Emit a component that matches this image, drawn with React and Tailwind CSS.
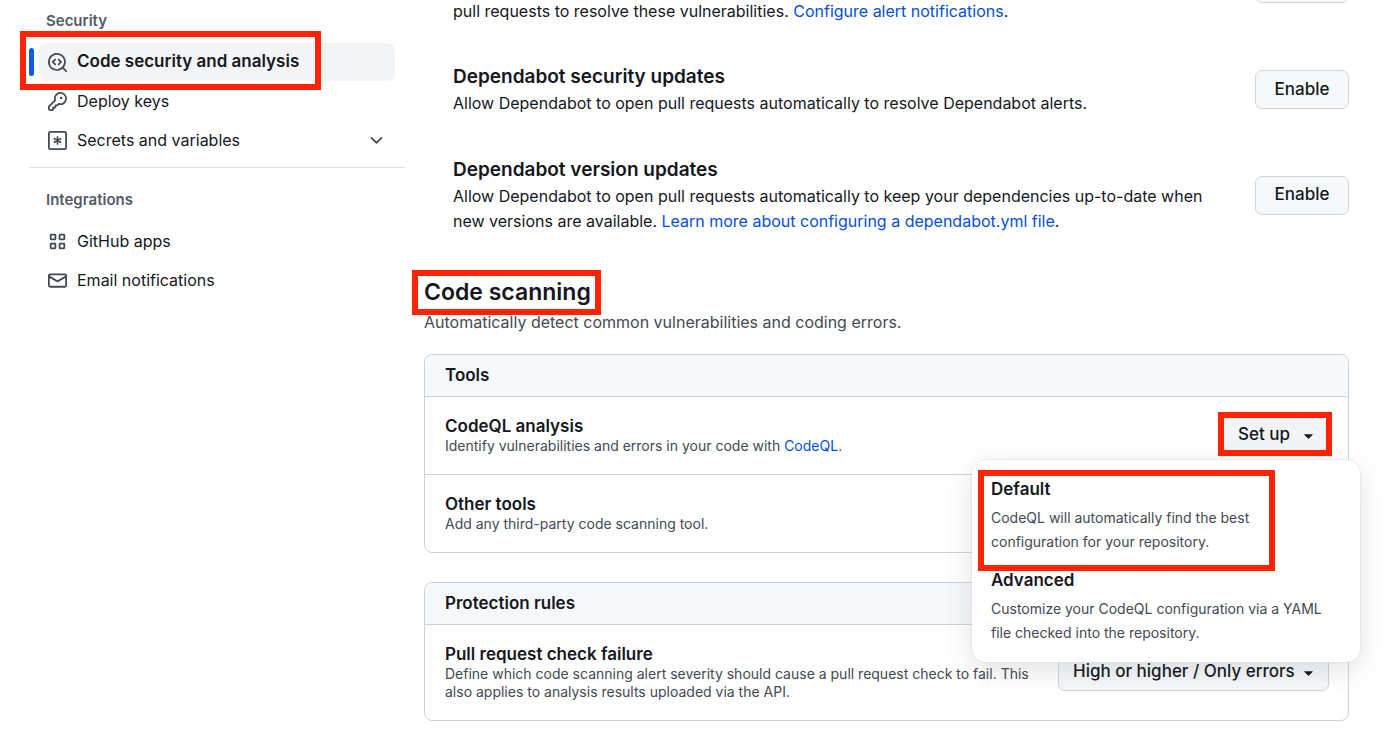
import React from "react";

const Icon = ({ className, children }) => (
  <svg viewBox="0 0 16 16" fill="currentColor" aria-hidden="true" className={className}>
    {children}
  </svg>
);

const CodescanIcon = (props) => (
  <Icon {...props}>
    <path d="M8.47 4.97a.75.75 0 0 0 0 1.06L9.94 7.5 8.47 8.97a.75.75 0 1 0 1.06 1.06l2-2a.75.75 0 0 0 0-1.06l-2-2a.75.75 0 0 0-1.06 0ZM6.53 6.03a.75.75 0 0 0-1.06-1.06l-2 2a.75.75 0 0 0 0 1.06l2 2a.75.75 0 1 0 1.06-1.06L5.06 7.5l1.47-1.47Z" />
    <path d="M12.246 13.307a7.501 7.501 0 1 1 1.06-1.06l2.474 2.473a.749.749 0 1 1-1.06 1.06l-2.474-2.473ZM1.5 7.5a6.002 6.002 0 0 0 3.608 5.504 6.002 6.002 0 0 0 6.486-1.117.748.748 0 0 1 .292-.293A6 6 0 1 0 1.5 7.5Z" />
  </Icon>
);

const KeyIcon = (props) => (
  <Icon {...props}>
    <path d="M10.5 0a5.499 5.499 0 1 1-1.288 10.848l-.932.932a.749.749 0 0 1-.53.22H7v.75a.749.749 0 0 1-.22.53l-.5.5a.749.749 0 0 1-.53.22H5v.75a.749.749 0 0 1-.22.53l-.5.5a.749.749 0 0 1-.53.22h-2A1.75 1.75 0 0 1 0 14.25v-2c0-.199.079-.389.22-.53l4.932-4.932A5.5 5.5 0 0 1 10.5 0Zm-4 5.5c-.001.431.069.86.205 1.269a.75.75 0 0 1-.181.768L1.5 12.56v1.69c0 .138.112.25.25.25h1.69l.06-.06v-1.19a.75.75 0 0 1 .75-.75h1.19l.06-.06v-1.19a.75.75 0 0 1 .75-.75h1.19l1.023-1.025a.75.75 0 0 1 .768-.18A4 4 0 1 0 6.5 5.5ZM11 6a1 1 0 1 1 0-2 1 1 0 0 1 0 2Z" />
  </Icon>
);

const KeyAsteriskIcon = (props) => (
  <Icon {...props}>
    <g fill="none" stroke="currentColor" strokeWidth="1.5">
      <rect x="0.75" y="0.75" width="14.5" height="14.5" rx="1.2" />
      <path d="M8 5v6M5.4 6.5l5.2 3M10.6 6.5l-5.2 3" strokeLinecap="round" strokeWidth="1.4" />
    </g>
  </Icon>
);

const AppsIcon = (props) => (
  <Icon {...props}>
    <g fill="none" stroke="currentColor" strokeWidth="1.5">
      <rect x="2.25" y="2.25" width="4" height="4" rx="0.5" />
      <rect x="9.75" y="2.25" width="4" height="4" rx="0.5" />
      <rect x="2.25" y="9.75" width="4" height="4" rx="0.5" />
      <rect x="9.75" y="9.75" width="4" height="4" rx="0.5" />
    </g>
  </Icon>
);

const MailIcon = (props) => (
  <Icon {...props}>
    <path d="M1.75 2h12.5c.966 0 1.75.784 1.75 1.75v8.5A1.75 1.75 0 0 1 14.25 14H1.75A1.75 1.75 0 0 1 0 12.25v-8.5C0 2.784.784 2 1.75 2ZM1.5 12.251c0 .138.112.25.25.25h12.5a.25.25 0 0 0 .25-.25V5.809L8.38 9.397a.75.75 0 0 1-.76 0L1.5 5.809v6.442Zm13-8.181v-.32a.25.25 0 0 0-.25-.25H1.75a.25.25 0 0 0-.25.25v.32L8 7.88Z" />
  </Icon>
);

const ChevronDownIcon = (props) => (
  <Icon {...props}>
    <path d="M12.78 5.22a.749.749 0 0 1 0 1.06l-4.25 4.25a.749.749 0 0 1-1.06 0L3.22 6.28a.749.749 0 1 1 1.06-1.06L8 8.939l3.72-3.719a.749.749 0 0 1 1.06 0Z" />
  </Icon>
);

const TriangleDownIcon = (props) => (
  <Icon {...props}>
    <path d="m4.427 7.427 3.396 3.396a.25.25 0 0 0 .354 0l3.396-3.396A.25.25 0 0 0 11.396 7H4.604a.25.25 0 0 0-.177.427Z" />
  </Icon>
);

const Marker = ({ className }) => (
  <span
    aria-hidden="true"
    className={`pointer-events-none absolute border-6 border-[#ff2205] ${className}`}
  />
);

const NavHeading = ({ children }) => (
  <h3 className="mb-[13px] pl-[17px] text-[15px] leading-[18px] font-semibold text-[#535b66]">
    {children}
  </h3>
);

const NavItem = ({ icon: ItemIcon, active, chevron, children }) => (
  <li className="relative px-[10px]">
    {active && (
      <span className="absolute top-[5px] left-0 h-7 w-[5px] rounded-full bg-[#0b5fdc]" />
    )}
    <a
      href="#"
      className={`flex h-[38px] items-center gap-[10px] rounded-lg px-[9px] ${
        active ? "bg-[#f3f4f6] text-[17px] font-semibold" : "text-base"
      }`}
    >
      <ItemIcon className="size-[19px] text-[#424a53]" />
      <span className="flex-1">{children}</span>
      {chevron && <ChevronDownIcon className="size-[19px] text-[#424a53]" />}
    </a>
    {active && <Marker className="-top-3 -bottom-[9px] -left-[9px] w-[301px]" />}
  </li>
);

const TextLink = ({ children }) => (
  <a href="#" className="text-[#0550d8] hover:underline">
    {children}
  </a>
);

const EnableButton = () => (
  <button
    type="button"
    className="h-[39px] w-[94px] shrink-0 rounded-[7px] border border-[#d1d5da] bg-[#f6f8fa] text-[17px] font-medium hover:bg-gray-100"
  >
    Enable
  </button>
);

const Feature = ({ title, children }) => (
  <div className="flex items-center justify-between gap-8">
    <div>
      <h3 className="text-[19px] leading-7 font-semibold">{title}</h3>
      <p className="text-base leading-[25px]">{children}</p>
    </div>
    <EnableButton />
  </div>
);

const Card = ({ title, children }) => (
  <section className="rounded-lg border border-[#cbd4dd]">
    <h3 className="rounded-t-lg bg-[#f6f8fa] px-5 text-[17px] leading-[41px] font-semibold">
      {title}
    </h3>
    {children}
  </section>
);

const CardRow = ({ title, htmlFor, description, children }) => (
  <div className="flex items-center justify-between gap-[14px] border-t border-[#cbd4dd] pt-[18px] pr-[19px] pb-[19px] pl-5">
    <div>
      {htmlFor ? (
        <label htmlFor={htmlFor} className="block text-[17px] leading-[22px] font-semibold">
          {title}
        </label>
      ) : (
        <h4 className="text-[17px] leading-[22px] font-semibold">{title}</h4>
      )}
      <p className="text-sm leading-[18px] text-[#424a53]">{description}</p>
    </div>
    {children}
  </div>
);

const MenuItem = ({ title, marked, children }) => (
  <button type="button" role="menuitem" className="relative block w-full text-left">
    <span className="block text-[17px] leading-6 font-semibold">{title}</span>
    <span className="mt-[5px] block text-sm leading-6 text-[#424a53]">{children}</span>
    {marked && <Marker className="-top-[7px] -bottom-[17px] -left-[13px] w-[297px]" />}
  </button>
);

const SetupMenu = () => (
  <div className="relative shrink-0">
    <button
      type="button"
      aria-haspopup="menu"
      aria-expanded="true"
      className="flex h-[38px] w-[106px] items-center justify-between rounded-[7px] border border-[#d1d5da] bg-[#f3f4f6] pr-[10px] pl-[14px] text-[17px] font-medium"
    >
      Set up
      <TriangleDownIcon className="size-[19px]" />
    </button>
    <Marker className="-top-1 -right-[3px] -bottom-[2px] -left-[5px]" />
    <div
      role="menu"
      className="absolute top-[44px] -right-[31px] z-10 flex w-[388px] flex-col gap-[14px] rounded-[14px] bg-white px-[19px] py-[17px] shadow-[0_0_0_1px_rgba(208,215,222,0.35),0_8px_28px_rgba(66,74,83,0.16)]"
    >
      <MenuItem title="Default" marked>
        CodeQL will automatically find the best
        <br />
        configuration for your repository.
      </MenuItem>
      <MenuItem title="Advanced">
        Customize your CodeQL configuration via a YAML
        <br />
        file checked into the repository.
      </MenuItem>
    </div>
  </div>
);

const Sidebar = () => (
  <nav className="w-[376px] shrink-0 pt-3">
    <NavHeading>Security</NavHeading>
    <ul className="flex flex-col gap-px">
      <NavItem icon={CodescanIcon} active>
        Code security and analysis
      </NavItem>
      <NavItem icon={KeyIcon}>Deploy keys</NavItem>
      <NavItem icon={KeyAsteriskIcon} chevron>
        Secrets and variables
      </NavItem>
    </ul>
    <hr className="mt-2 mb-[23px] border-[#dfe2e6]" />
    <NavHeading>Integrations</NavHeading>
    <ul className="flex flex-col gap-px">
      <NavItem icon={AppsIcon}>GitHub apps</NavItem>
      <NavItem icon={MailIcon}>Email notifications</NavItem>
    </ul>
  </nav>
);

const App = () => {
  return (
    <div className="flex gap-[19px] overflow-hidden bg-white pr-[51px] pb-6 pl-[29px] font-['Inter',sans-serif] text-[#14181d]">
      <Sidebar />

      <main className="min-w-0 flex-1">
        <div className="flex flex-col gap-10 pl-[29px]">
          <div className="flex h-[23px] items-start justify-between">
            <p className="text-base leading-[22px]">
              pull requests to resolve these vulnerabilities.{" "}
              <TextLink>Configure alert notifications</TextLink>.
            </p>
            <div className="-mt-9">
              <EnableButton />
            </div>
          </div>

          <Feature title="Dependabot security updates">
            Allow Dependabot to open pull requests automatically to resolve Dependabot alerts.
          </Feature>

          <Feature title="Dependabot version updates">
            Allow Dependabot to open pull requests automatically to keep your dependencies
            up-to-date when new versions are available.{" "}
            <TextLink>Learn more about configuring a dependabot.yml file</TextLink>.
          </Feature>
        </div>

        {/* Code scanning */}
        <div className="relative mt-10 w-fit">
          <h2 className="text-[23px] leading-9 font-semibold">Code scanning</h2>
          <Marker className="-top-1 -bottom-[5px] -left-3 w-[189px]" />
        </div>
        <p className="mb-[19px] text-base leading-[25px] text-[#424a53]">
          Automatically detect common vulnerabilities and coding errors.
        </p>

        <div className="flex flex-col gap-[29px]">
          <Card title="Tools">
            <CardRow
              title="CodeQL analysis"
              description={
                <>
                  Identify vulnerabilities and errors in your code with{" "}
                  <TextLink>CodeQL</TextLink>.
                </>
              }
            >
              <SetupMenu />
            </CardRow>
            <CardRow
              title="Other tools"
              description="Add any third-party code scanning tool."
            />
          </Card>

          <Card title="Protection rules">
            <CardRow
              title="Pull request check failure"
              htmlFor="severity"
              description="Define which code scanning alert severity should cause a pull request check to fail. This also applies to analysis results uploaded via the API."
            >
              <div className="relative shrink-0">
                <select
                  id="severity"
                  className="h-[38px] w-[271px] appearance-none rounded-[7px] border border-[#d1d5da] bg-[#f6f8fa] pl-[14px] text-[17px] font-medium"
                >
                  <option>High or higher / Only errors</option>
                </select>
                <TriangleDownIcon className="pointer-events-none absolute top-[10px] right-[11px] size-[19px]" />
              </div>
            </CardRow>
          </Card>
        </div>
      </main>
    </div>
  );
};

export default App;
